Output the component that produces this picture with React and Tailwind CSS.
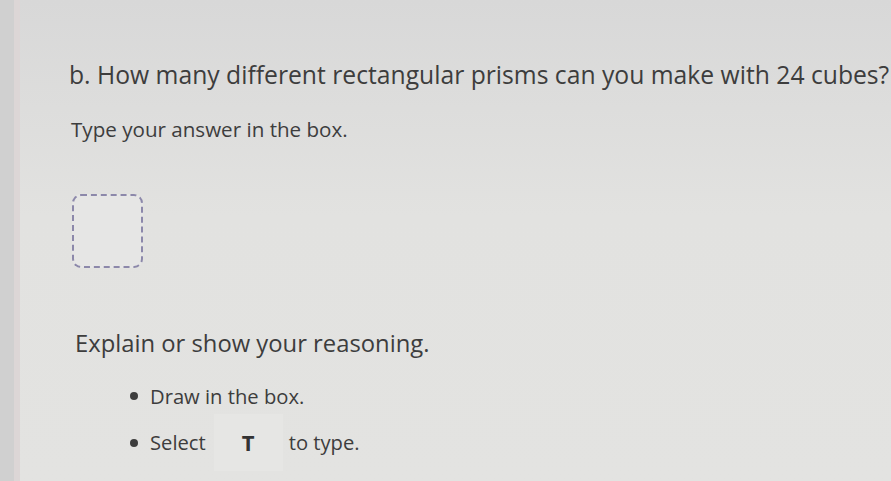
export default function App() {
  return (
    <div className="w-[891px] h-[481px] overflow-hidden flex bg-[linear-gradient(180deg,#d8d8d8_0%,#e2e2e0_45%,#e3e3e1_100%)] text-[#3d3d3d]" style={{ fontFamily: '"Open Sans", sans-serif' }}>
      <div className="w-[14px] h-full bg-[#d0d0d0] shrink-0" />
      <div className="w-[6px] h-full bg-[#dcd6d6] shrink-0" />
      <div className="flex-1 flex flex-col pl-[49px] pt-[58px] whitespace-nowrap">
        <div className="text-[24.7px] leading-[34px]">b. How many different rectangular prisms can you make with 24 cubes?</div>
        <div className="mt-[23px] ml-[2px] text-[20.6px] leading-[28px]">Type your answer in the box.</div>
        <div className="mt-[51px] ml-[3px] w-[71px] h-[74px] rounded-[9px] border-2 border-dashed border-[#8c88aa] bg-[#e6e6e5]" />
        <div className="mt-[59px] ml-[6px] text-[23.8px] leading-[32px]">Explain or show your reasoning.</div>
        <ul className="mt-[22px] ml-[61px] flex flex-col text-[20.2px]">
          <li className="flex items-center h-[30px]">
            <span className="w-[8px] h-[8px] rounded-full bg-[#3d3d3d] mr-[12px]" />
            <span>Draw in the box.</span>
          </li>
          <li className="flex items-center mt-[3px]">
            <span className="w-[8px] h-[8px] rounded-full bg-[#3d3d3d] mr-[12px]" />
            <span>Select</span>
            <span className="ml-[8px] w-[69px] h-[57px] bg-[#e6e6e4] flex items-center justify-center text-[22px] font-bold text-[#333]">T</span>
            <span className="ml-[6px]">to type.</span>
          </li>
        </ul>
      </div>
    </div>
  );
}
